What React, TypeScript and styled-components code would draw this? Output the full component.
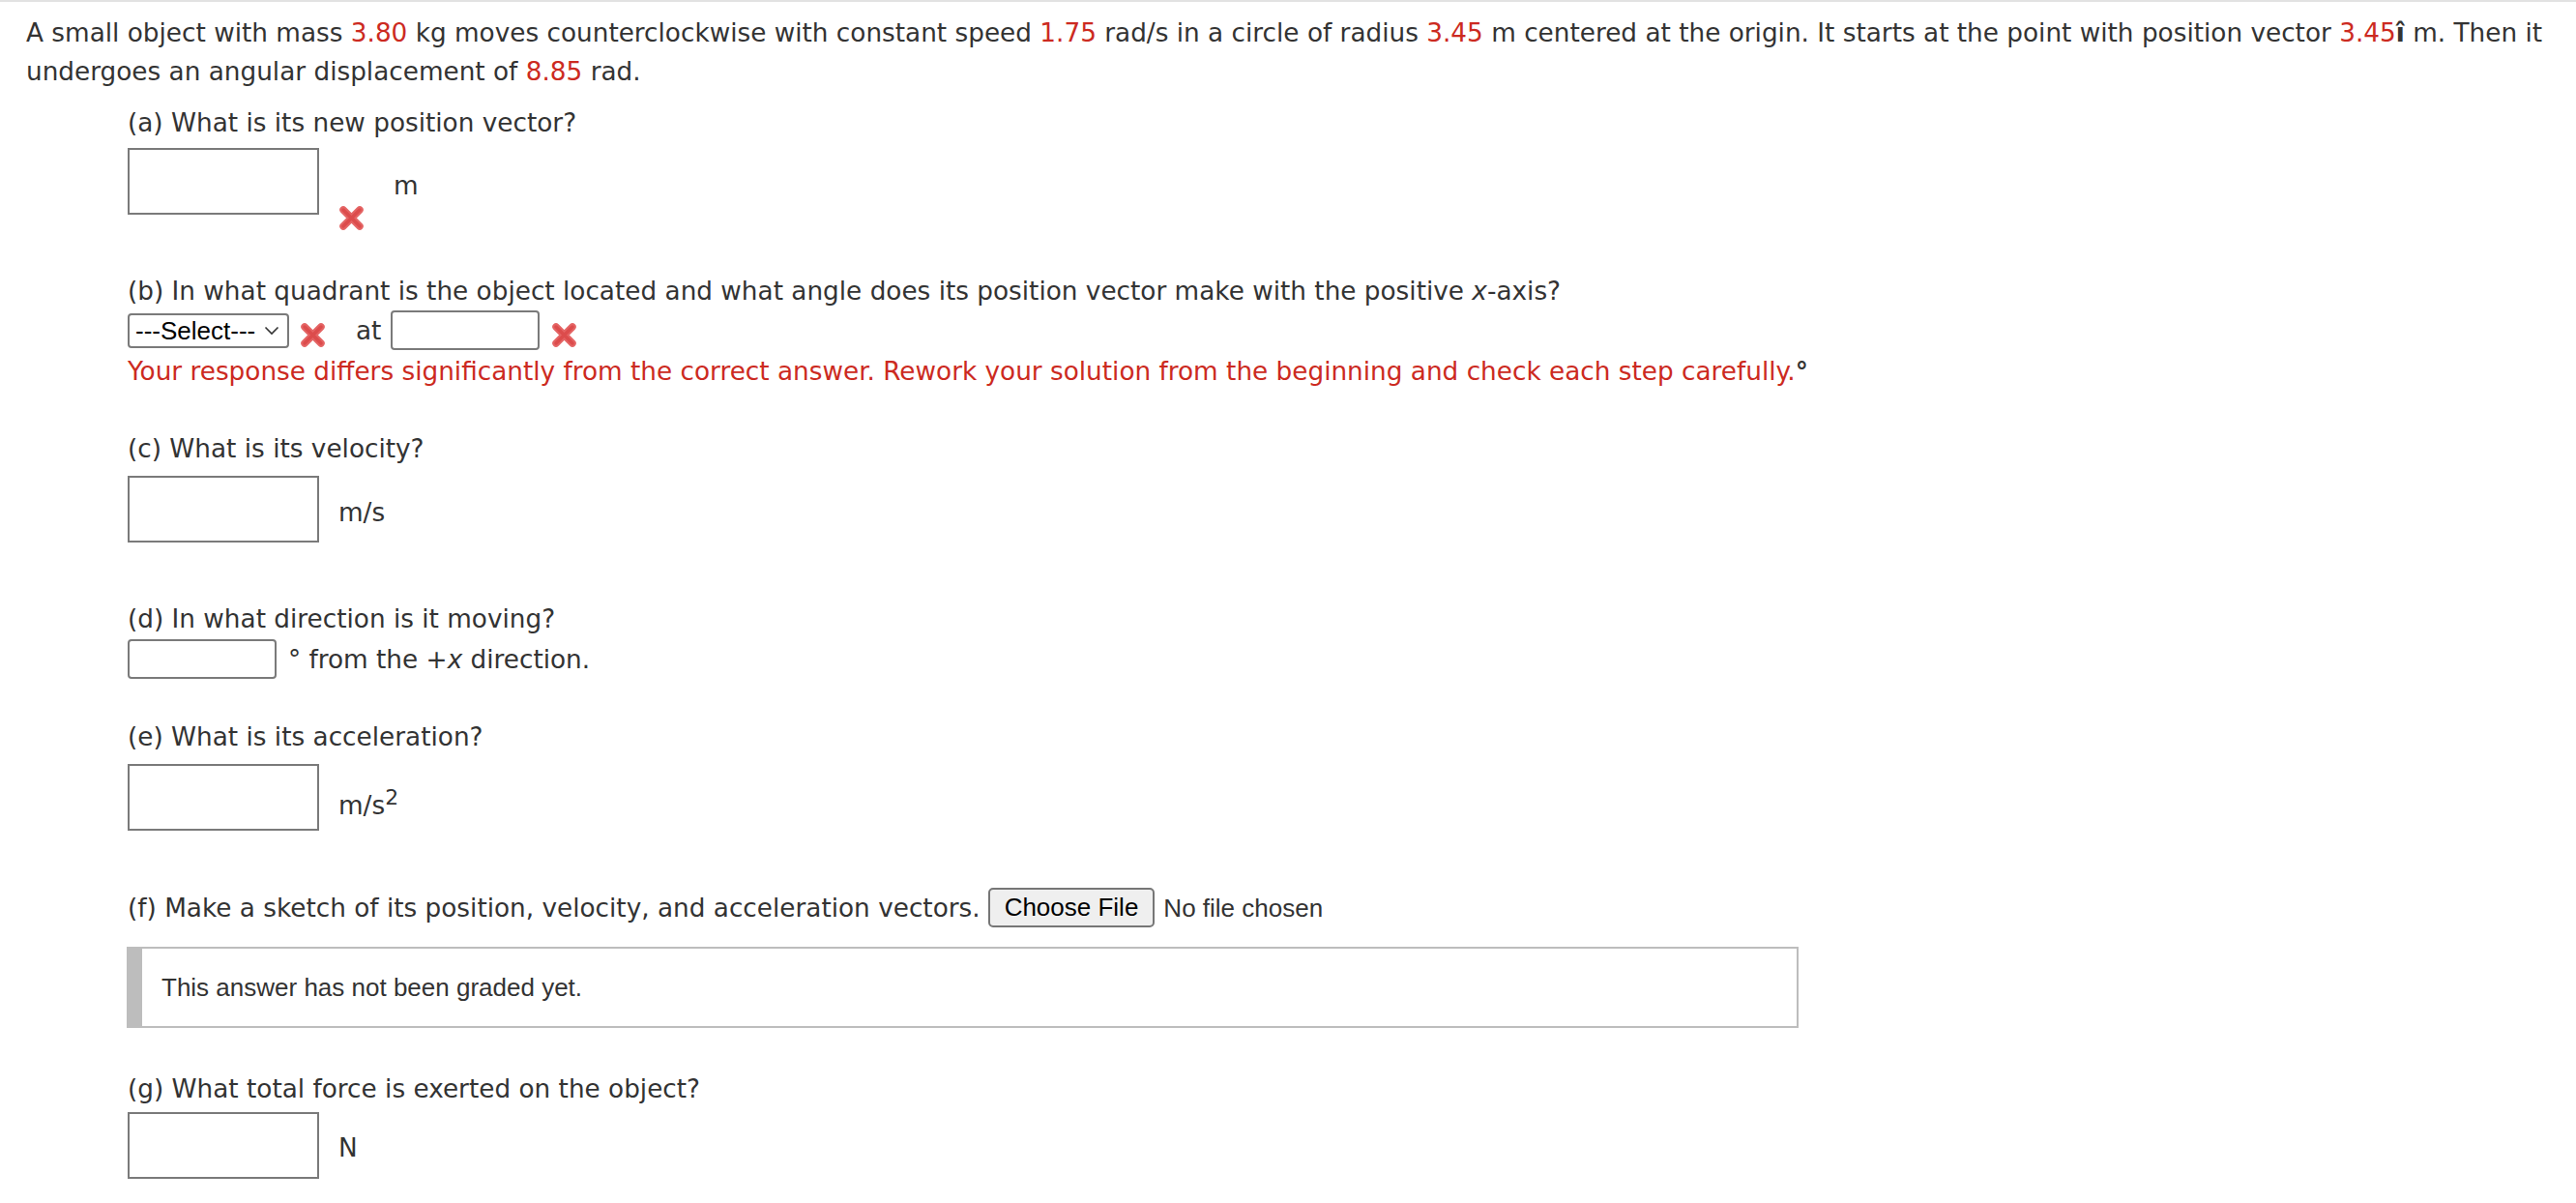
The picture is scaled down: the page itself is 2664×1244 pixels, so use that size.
import React from 'react';
import styled, {createGlobalStyle} from 'styled-components';

const GlobalStyle = createGlobalStyle`
  body {
    margin: 0;
    background: #fff;
    color: #333;
    font-family: "DejaVu Sans", Verdana, sans-serif;
  }
`

const Page = styled.div`
  border-top: 2px solid #e2e2e2;
  padding: 12px 27px 40px 27px;
  font-size: 26.3px;
  line-height: 40px;
`

const Intro = styled.p`
  margin: 0;
`

const Val = styled.span`
  color: #cc2a21;
`

const Questions = styled.div`
  padding-left: 105px;
`

const Question = styled.div<{ $top: number }>`
  margin-top: ${props => props.$top}px;
`

const Prompt = styled.div`
  line-height: 40px;
`

const AnswerRow = styled.div<{ $top: number; $center?: boolean }>`
  display: flex;
  align-items: ${props => props.$center ? 'center' : 'flex-start'};
  margin-top: ${props => props.$top}px;
`

const NumBox = styled.input<{ $narrow?: boolean }>`
  box-sizing: border-box;
  width: ${props => props.$narrow ? '154px' : '198px'};
  height: ${props => props.$narrow ? '41px' : '69px'};
  border: 2px solid #7a7a7a;
  border-radius: ${props => props.$narrow ? '4px' : '0'};
  background: #fff;
  margin: 0;
  padding: 0 8px;
  font: inherit;
  outline: none;
`

const Unit = styled.span<{ $top?: number; $left?: number }>`
  line-height: 40px;
  margin-top: ${props => props.$top || 0}px;
  margin-left: ${props => props.$left ?? 20}px;
`

const MarkBox = styled.span<{ $top?: number; $left: number }>`
  display: inline-flex;
  width: 29px;
  height: 29px;
  margin-top: ${props => props.$top || 0}px;
  margin-left: ${props => props.$left}px;
`

const Picker = styled.div`
  box-sizing: border-box;
  width: 167px;
  height: 36px;
  border: 2px solid #7a7a7a;
  border-radius: 4px;
  display: flex;
  align-items: center;
  justify-content: space-between;
  padding: 0 8px 0 6px;
  font-family: "Liberation Sans", Arial, sans-serif;
  font-size: 26px;
  color: #000;
`

const AtWord = styled.span`
  margin: 0 10px 0 30px;
`

const Feedback = styled.div`
  color: #cc2a21;
  margin-top: 2px;
`

const Degree = styled.span`
  color: #333;
  font-weight: bold;
`

const FileButton = styled.button`
  box-sizing: border-box;
  height: 41px;
  margin-left: 8px;
  padding: 0 15px;
  background: #efefef;
  border: 2px solid #767676;
  border-radius: 5px;
  font-family: "Liberation Sans", Arial, sans-serif;
  font-size: 26px;
  color: #000;
`

const FileName = styled.span`
  margin-left: 9px;
  font-family: "Liberation Sans", Arial, sans-serif;
  font-size: 26px;
  color: #333;
`

const GradeNote = styled.div`
  box-sizing: border-box;
  width: 1729px;
  height: 84px;
  margin-top: 20px;
  margin-left: -1px;
  border: 2px solid #bdbdbd;
  border-left: 16px solid #bdbdbd;
  padding-left: 20px;
  display: flex;
  align-items: center;
  font-family: "Liberation Sans", Arial, sans-serif;
  font-size: 26px;
  color: #333;
`

const Wrong = ({top, left}: { top?: number; left: number }) => (
    <MarkBox $top={top} $left={left}>
        <svg width="29" height="29" viewBox="0 0 29 29">
            <path d="M6 6 L23 23 M23 6 L6 23" stroke="#e46464" strokeWidth="7.5"
                  strokeLinecap="round" fill="none"/>
            <path d="M6 6 L23 23 M23 6 L6 23" stroke="#dc4c4c" strokeWidth="3.5"
                  strokeLinecap="round" fill="none"/>
        </svg>
    </MarkBox>
)

const Chevron = () => (
    <svg width="16" height="10" viewBox="0 0 16 10">
        <path d="M1.5 1.5 L8 8 L14.5 1.5" stroke="#333" strokeWidth="1.6" fill="none"/>
    </svg>
)

export default function App() {
    return (
        <>
            <GlobalStyle/>
            <Page>
                <Intro>
                    A small object with mass <Val>3.80</Val> kg moves counterclockwise with constant speed <Val>1.75</Val> rad/s
                    in a circle of radius <Val>3.45</Val> m centered at the origin. It starts at the point with position
                    vector <Val>3.45</Val><b>î</b> m. Then it undergoes an angular displacement of <Val>8.85</Val> rad.
                </Intro>
                <Questions>
                    <Question $top={13}>
                        <Prompt>(a) What is its new position vector?</Prompt>
                        <AnswerRow $top={6}>
                            <NumBox/>
                            <Wrong top={58} left={19}/>
                            <Unit $top={19} $left={29}>m</Unit>
                        </AnswerRow>
                    </Question>

                    <Question $top={41}>
                        <Prompt>(b) In what quadrant is the object located and what angle does its position vector make with
                            the positive <i>x</i>-axis?</Prompt>
                        <AnswerRow $top={0} $center>
                            <Picker>---Select--- <Chevron/></Picker>
                            <Wrong top={10} left={10}/>
                            <AtWord>at</AtWord>
                            <NumBox $narrow/>
                            <Wrong top={10} left={11}/>
                        </AnswerRow>
                        <Feedback>
                            Your response differs significantly from the correct answer. Rework your solution from the
                            beginning and check each step carefully.<Degree>°</Degree>
                        </Feedback>
                    </Question>

                    <Question $top={40}>
                        <Prompt>(c) What is its velocity?</Prompt>
                        <AnswerRow $top={8}>
                            <NumBox/>
                            <Unit $top={18}>m/s</Unit>
                        </AnswerRow>
                    </Question>

                    <Question $top={59}>
                        <Prompt>(d) In what direction is it moving?</Prompt>
                        <AnswerRow $top={1} $center>
                            <NumBox $narrow/>
                            <Unit $left={12}>° from the +<i>x</i> direction.</Unit>
                        </AnswerRow>
                    </Question>

                    <Question $top={40}>
                        <Prompt>(e) What is its acceleration?</Prompt>
                        <AnswerRow $top={8}>
                            <NumBox/>
                            <Unit $top={15}>m/s<sup>2</sup></Unit>
                        </AnswerRow>
                    </Question>

                    <Question $top={59}>
                        <AnswerRow $top={0} $center>
                            <Prompt>(f) Make a sketch of its position, velocity, and acceleration vectors.</Prompt>
                            <FileButton>Choose File</FileButton>
                            <FileName>No file chosen</FileName>
                        </AnswerRow>
                        <GradeNote>This answer has not been graded yet.</GradeNote>
                    </Question>

                    <Question $top={43}>
                        <Prompt>(g) What total force is exerted on the object?</Prompt>
                        <AnswerRow $top={4}>
                            <NumBox/>
                            <Unit $top={17}>N</Unit>
                        </AnswerRow>
                    </Question>
                </Questions>
            </Page>
        </>
    );
}
